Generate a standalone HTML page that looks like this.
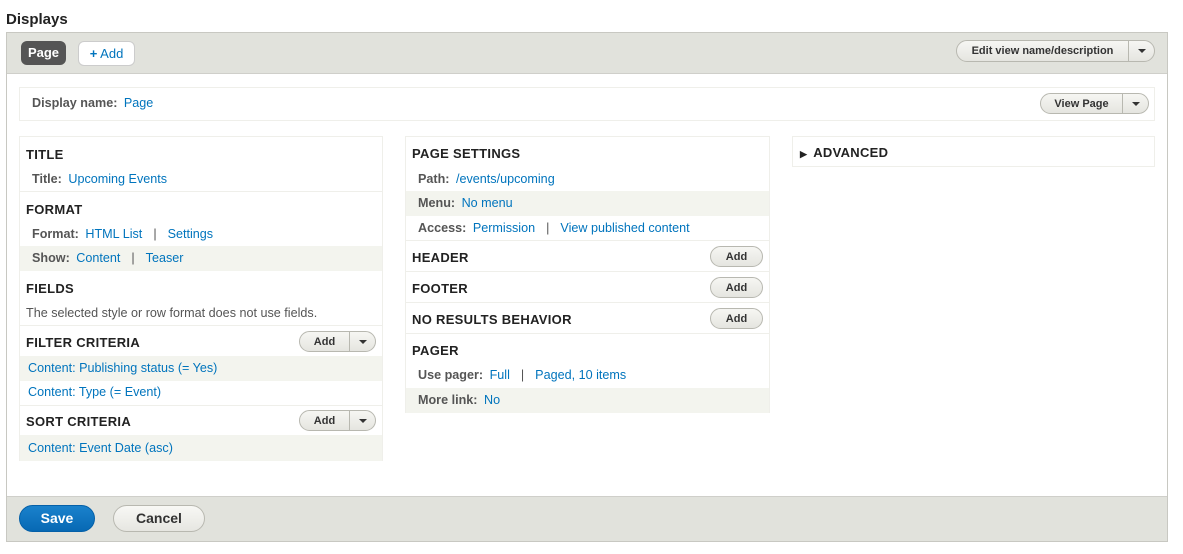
<!DOCTYPE html>
<html><head><meta charset="utf-8"><style>
*{box-sizing:border-box;margin:0;padding:0}
body{width:1183px;height:554px;background:#fff;font-family:"Liberation Sans",sans-serif;font-size:12.6px;color:#333;position:relative;overflow:hidden}
.a{position:absolute}
a{color:#0074bd;text-decoration:none}
.l{color:#555;font-weight:bold;margin-right:3px}
.h{font-weight:bold;font-size:13px;color:#222;letter-spacing:.3px}
.box{position:absolute;border:1px solid #efefea;background:#fff}
.row{position:absolute;left:0;right:0;height:25px;line-height:25px;padding-left:8px}
.g{background:#f3f4ee}
.sep{position:absolute;left:0;right:0;height:1px;background:#efefea}
.btn{position:absolute;height:21px;border:1px solid #b8b8b0;border-radius:11px;background:linear-gradient(#f6f6f3,#e5e5e0);font-size:11px;font-weight:bold;color:#333;line-height:20px;text-align:center}
.dd{position:absolute;top:0;bottom:0;right:0;width:26px;border-left:1px solid #b8b8b0}
.dd:after{content:"";position:absolute;left:9px;top:8px;border:4px solid transparent;border-top:4px solid #333;border-bottom:0}
.sp{color:#555;margin:0 11px}
</style></head><body>
<div class="a" style="left:6px;top:11px;font-size:15px;font-weight:bold;color:#222">Displays</div>
<div class="a" style="left:6px;top:32px;width:1162px;height:510px;border:1px solid #c8c8c2"></div>
<div class="a" style="left:7px;top:33px;width:1160px;height:41px;background:#e1e2dc;border-bottom:1px solid #cfcfca"></div>
<div class="a" style="left:21px;top:41px;width:45px;height:24px;background:#555;border-radius:6px;color:#fff;font-weight:bold;font-size:13px;line-height:24px;text-align:center">Page</div>
<div class="a" style="left:78px;top:41px;width:57px;height:25px;background:#fff;border:1px solid #ccc;border-radius:6px;color:#0074bd;font-size:13px;line-height:23px;text-align:center"><b>+</b> Add</div>
<div class="btn" style="left:956px;top:40px;width:199px;height:22px;padding-right:26px;line-height:21px">Edit view name/description<span class="dd"></span></div>

<div class="box" style="left:19px;top:87px;width:1136px;height:34px"></div>
<div class="a" style="left:32px;top:96px"><span class="l">Display name:</span> <a>Page</a></div>
<div class="btn" style="left:1040px;top:93px;width:109px;height:21px;padding-right:26px">View Page<span class="dd"></span></div>

<!-- col1 -->
<div class="box" style="left:19px;top:136px;width:364px;height:325px">
 <div class="row h" style="top:5px;padding-left:6px">TITLE</div>
 <div class="row" style="top:30px;padding-left:12px"><span class="l">Title:</span> <a>Upcoming Events</a></div>
 <div class="sep" style="top:54px"></div>
 <div class="row h" style="top:60px;padding-left:6px">FORMAT</div>
 <div class="row" style="top:85px;padding-left:12px"><span class="l">Format:</span> <a>HTML List</a><span class="sp">|</span><a>Settings</a></div>
 <div class="row g" style="top:109px;padding-left:12px"><span class="l">Show:</span> <a>Content</a><span class="sp">|</span><a>Teaser</a></div>
 <div class="row h" style="top:139px;padding-left:6px">FIELDS</div>
 <div class="row" style="top:164px;padding-left:6px;color:#555">The selected style or row format does not use fields.</div>
 <div class="sep" style="top:188px"></div>
 <div class="row h" style="top:193px;padding-left:6px">FILTER CRITERIA</div>
 <div class="btn" style="left:279px;top:194px;width:77px;padding-right:26px">Add<span class="dd"></span></div>
 <div class="row g" style="top:219px"><a>Content: Publishing status (= Yes)</a></div>
 <div class="row" style="top:243px"><a>Content: Type (= Event)</a></div>
 <div class="sep" style="top:268px"></div>
 <div class="row h" style="top:272px;padding-left:6px">SORT CRITERIA</div>
 <div class="btn" style="left:279px;top:273px;width:77px;padding-right:26px">Add<span class="dd"></span></div>
 <div class="row g" style="top:298px;height:26px;line-height:26px"><a>Content: Event Date (asc)</a></div>
</div>

<!-- col2 -->
<div class="box" style="left:405px;top:136px;width:365px;height:277px">
 <div class="row h" style="top:4px;padding-left:6px">PAGE SETTINGS</div>
 <div class="row" style="top:30px;padding-left:12px"><span class="l">Path:</span> <a>/events/upcoming</a></div>
 <div class="row g" style="top:54px;padding-left:12px"><span class="l">Menu:</span> <a>No menu</a></div>
 <div class="row" style="top:79px;padding-left:12px"><span class="l">Access:</span> <a>Permission</a><span class="sp">|</span><a>View published content</a></div>
 <div class="sep" style="top:103px"></div>
 <div class="row h" style="top:108px;padding-left:6px">HEADER</div>
 <div class="btn" style="left:304px;top:109px;width:53px">Add</div>
 <div class="sep" style="top:134px"></div>
 <div class="row h" style="top:139px;padding-left:6px">FOOTER</div>
 <div class="btn" style="left:304px;top:140px;width:53px">Add</div>
 <div class="sep" style="top:165px"></div>
 <div class="row h" style="top:170px;padding-left:6px">NO RESULTS BEHAVIOR</div>
 <div class="btn" style="left:304px;top:171px;width:53px">Add</div>
 <div class="sep" style="top:196px"></div>
 <div class="row h" style="top:201px;padding-left:6px">PAGER</div>
 <div class="row" style="top:226px;padding-left:12px"><span class="l">Use pager:</span> <a>Full</a><span class="sp">|</span><a>Paged, 10 items</a></div>
 <div class="row g" style="top:251px;padding-left:12px"><span class="l">More link:</span> <a>No</a></div>
</div>

<!-- col3 -->
<div class="box" style="left:792px;top:136px;width:363px;height:31px">
 <div class="a h" style="left:7px;top:8px"><span style="font-size:9px;margin-right:6px">&#9654;</span>ADVANCED</div>
</div>

<div class="a" style="left:7px;top:496px;width:1160px;height:45px;background:#e1e2dc;border-top:1px solid #cfcfca"></div>
<div class="a" style="left:19px;top:505px;width:76px;height:27px;background:linear-gradient(#1a82cc,#0769b4);border:1px solid #0560a8;border-radius:14px;color:#fff;font-weight:bold;font-size:14px;line-height:25px;text-align:center">Save</div>
<div class="a" style="left:113px;top:505px;width:92px;height:27px;background:linear-gradient(#f8f8f5,#e6e6e1);border:1px solid #b8b8b0;border-radius:14px;color:#333;font-weight:bold;font-size:14px;line-height:25px;text-align:center">Cancel</div>
</body></html>
